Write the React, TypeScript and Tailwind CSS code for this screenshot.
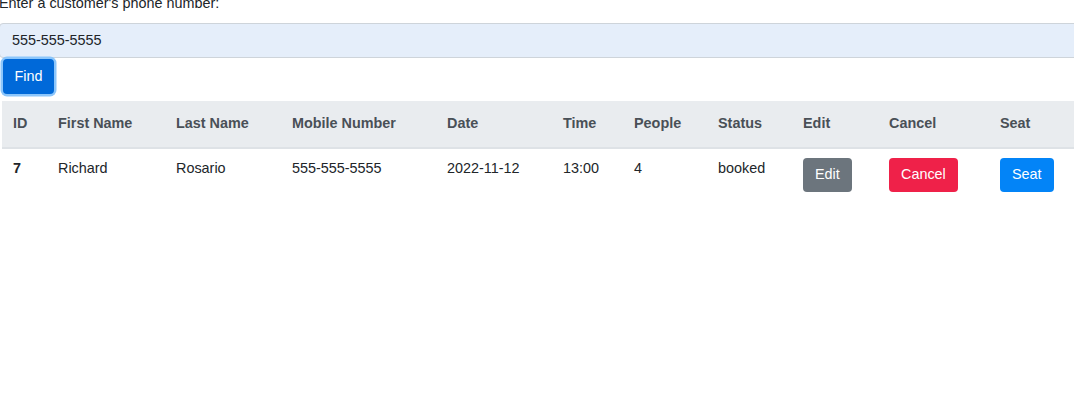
const cols = [
  { label: "ID", w: 45 },
  { label: "First Name", w: 118 },
  { label: "Last Name", w: 116 },
  { label: "Mobile Number", w: 155 },
  { label: "Date", w: 116 },
  { label: "Time", w: 71 },
  { label: "People", w: 84 },
  { label: "Status", w: 85 },
  { label: "Edit", w: 86 },
  { label: "Cancel", w: 111 },
  { label: "Seat", w: 85 },
];

const reservation = {
  id: 7,
  first: "Richard",
  last: "Rosario",
  mobile: "555-555-5555",
  date: "2022-11-12",
  time: "13:00",
  people: 4,
  status: "booked",
};

export default function App() {
  return (
    <div className="min-h-screen overflow-hidden bg-white font-['Liberation_Sans',Arial,sans-serif] text-[14.4px] leading-[21.6px] text-[#212529]">
      {/* Search */}
      <label htmlFor="mobile_number" className="block -mt-[7px] mb-[8px] -ml-px">
        Enter a customer's phone number:
      </label>
      <input
        id="mobile_number"
        readOnly
        value="555-555-5555"
        className="block w-[calc(100%+12px)] -ml-px h-[35.6px] px-[12px] py-[5px] border border-[#ced4da] rounded bg-[#e5eefa] text-[#212529] outline-none"
      />
      <div className="pt-[1px] pl-[3px]">
        <button className="w-[51px] h-[35.2px] bg-[#0069d9] text-white rounded shadow-[0_0_0_2.5px_#8cc6fb]">
          Find
        </button>
      </div>

      {/* Results */}
      <table className="mt-[7px] ml-[2px] w-[1072px] table-fixed border-collapse">
        <colgroup>
          {cols.map((c) => (
            <col key={c.label} style={{ width: c.w }} />
          ))}
        </colgroup>
        <thead>
          <tr className="bg-[#e9ecef] border-b-2 border-[#dee2e6]">
            {cols.map((c) => (
              <th
                key={c.label}
                className="text-left font-bold text-[#495057] pl-[11px] py-[12px] whitespace-nowrap"
              >
                {c.label}
              </th>
            ))}
          </tr>
        </thead>
        <tbody>
          <tr className="align-top">
            <td className="pl-[11px] pt-[9px] font-bold">{reservation.id}</td>
            <td className="pl-[11px] pt-[9px]">{reservation.first}</td>
            <td className="pl-[11px] pt-[9px]">{reservation.last}</td>
            <td className="pl-[11px] pt-[9px]">{reservation.mobile}</td>
            <td className="pl-[11px] pt-[9px]">{reservation.date}</td>
            <td className="pl-[11px] pt-[9px]">{reservation.time}</td>
            <td className="pl-[11px] pt-[9px]">{reservation.people}</td>
            <td className="pl-[11px] pt-[9px]">{reservation.status}</td>
            <td className="pl-[11px] pt-[9.5px]">
              <button className="h-[33.4px] px-[12px] bg-[#6c757d] text-white rounded">Edit</button>
            </td>
            <td className="pl-[11px] pt-[9.5px]">
              <button className="h-[33.4px] px-[12px] bg-[#ef2149] text-white rounded">Cancel</button>
            </td>
            <td className="pl-[11px] pt-[9.5px]">
              <button className="h-[33.4px] px-[12px] bg-[#0384f7] text-white rounded">Seat</button>
            </td>
          </tr>
        </tbody>
      </table>
    </div>
  );
}
